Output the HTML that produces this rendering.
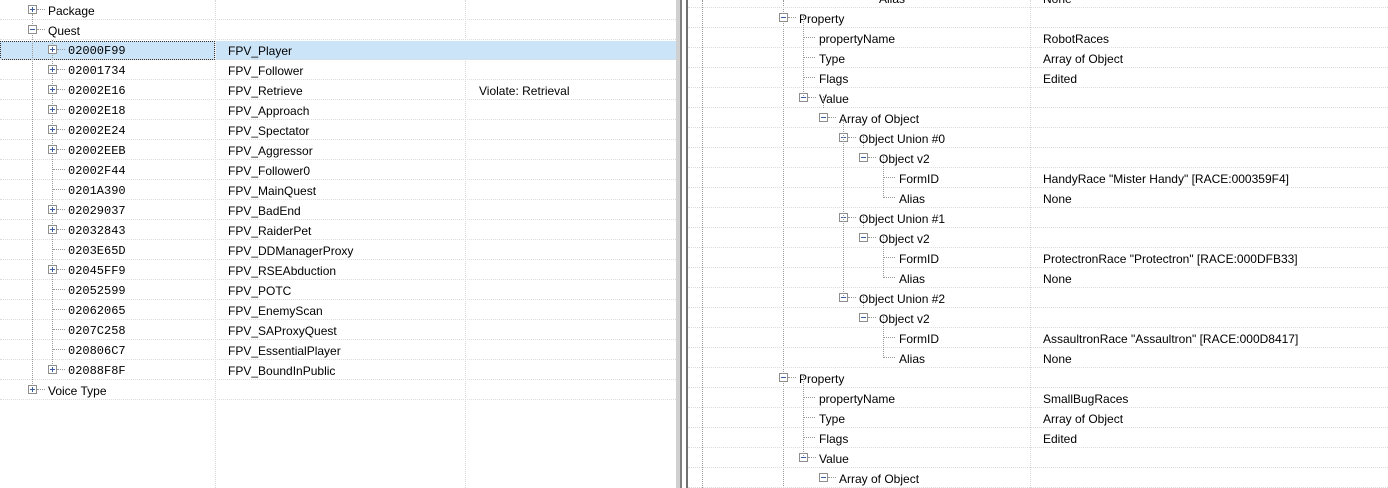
<!DOCTYPE html><html><head><style>
body{margin:0;width:1388px;height:488px;overflow:hidden;background:#fff;font:12px "Liberation Sans",sans-serif;color:#000;position:relative}
.r{position:absolute;height:20px;border-bottom:1px dotted #dcdcdc;box-sizing:border-box}
.t{position:absolute;top:4px;white-space:nowrap}
.m{font-family:"Liberation Mono",monospace;font-size:12px}
.b{position:absolute;top:5px;width:7px;height:7px;border:1px solid #8e8e8e;background:#fff}
.b:before{content:"";position:absolute;left:1px;top:3px;width:5px;height:1px;background:#3a5ea0}
.p:after{content:"";position:absolute;left:3px;top:1px;width:1px;height:5px;background:#3a5ea0}
.h{position:absolute;top:9px;height:0;border-top:1px dotted #999}
.v{position:absolute;width:0;border-left:1px dotted #999}
.cv{position:absolute;width:0;border-left:1px dotted #d8d8d8;top:0;height:488px}
#W{position:absolute;left:0;top:0;width:1388px;height:488px;overflow:hidden}
#RR{position:absolute;left:0;top:-10px;width:1388px;height:500px}
</style></head><body><div id="W">
<div class="cv" style="left:215px"></div><div class="cv" style="left:465px"></div>
<div class="cv" style="left:1030px"></div>
<div style="position:absolute;left:0;top:41px;width:215px;height:19px;background:#cce4f7;border:1px dotted #333;box-sizing:border-box"></div>
<div style="position:absolute;left:216px;top:41px;width:460px;height:19px;background:#cce4f7"></div>
<div class="v" style="left:32px;top:14px;height:378px"></div>
<div class="v" style="left:52px;top:40px;height:332px"></div>
<div class="r" style="top:0;left:0;width:676px"><div class="b p" style="left:28px"></div><div class="h" style="left:37px;width:8px"></div><div class="t" style="left:48px">Package</div></div>
<div class="r" style="top:20px;left:0;width:676px"><div class="b" style="left:28px"></div><div class="h" style="left:37px;width:8px"></div><div class="t" style="left:48px">Quest</div></div>
<div class="r" style="top:40px;left:0;width:676px"><div class="b p" style="left:48px"></div><div class="h" style="left:57px;width:8px"></div><div class="t m" style="left:68px">02000F99</div><div class="t" style="left:228px">FPV_Player</div></div>
<div class="r" style="top:60px;left:0;width:676px"><div class="b p" style="left:48px"></div><div class="h" style="left:57px;width:8px"></div><div class="t m" style="left:68px">02001734</div><div class="t" style="left:228px">FPV_Follower</div></div>
<div class="r" style="top:80px;left:0;width:676px"><div class="b p" style="left:48px"></div><div class="h" style="left:57px;width:8px"></div><div class="t m" style="left:68px">02002E16</div><div class="t" style="left:228px">FPV_Retrieve</div><div class="t" style="left:479px">Violate: Retrieval</div></div>
<div class="r" style="top:100px;left:0;width:676px"><div class="b p" style="left:48px"></div><div class="h" style="left:57px;width:8px"></div><div class="t m" style="left:68px">02002E18</div><div class="t" style="left:228px">FPV_Approach</div></div>
<div class="r" style="top:120px;left:0;width:676px"><div class="b p" style="left:48px"></div><div class="h" style="left:57px;width:8px"></div><div class="t m" style="left:68px">02002E24</div><div class="t" style="left:228px">FPV_Spectator</div></div>
<div class="r" style="top:140px;left:0;width:676px"><div class="b p" style="left:48px"></div><div class="h" style="left:57px;width:8px"></div><div class="t m" style="left:68px">02002EEB</div><div class="t" style="left:228px">FPV_Aggressor</div></div>
<div class="r" style="top:160px;left:0;width:676px"><div class="h" style="left:53px;width:12px"></div><div class="t m" style="left:68px">02002F44</div><div class="t" style="left:228px">FPV_Follower0</div></div>
<div class="r" style="top:180px;left:0;width:676px"><div class="h" style="left:53px;width:12px"></div><div class="t m" style="left:68px">0201A390</div><div class="t" style="left:228px">FPV_MainQuest</div></div>
<div class="r" style="top:200px;left:0;width:676px"><div class="b p" style="left:48px"></div><div class="h" style="left:57px;width:8px"></div><div class="t m" style="left:68px">02029037</div><div class="t" style="left:228px">FPV_BadEnd</div></div>
<div class="r" style="top:220px;left:0;width:676px"><div class="b p" style="left:48px"></div><div class="h" style="left:57px;width:8px"></div><div class="t m" style="left:68px">02032843</div><div class="t" style="left:228px">FPV_RaiderPet</div></div>
<div class="r" style="top:240px;left:0;width:676px"><div class="h" style="left:53px;width:12px"></div><div class="t m" style="left:68px">0203E65D</div><div class="t" style="left:228px">FPV_DDManagerProxy</div></div>
<div class="r" style="top:260px;left:0;width:676px"><div class="b p" style="left:48px"></div><div class="h" style="left:57px;width:8px"></div><div class="t m" style="left:68px">02045FF9</div><div class="t" style="left:228px">FPV_RSEAbduction</div></div>
<div class="r" style="top:280px;left:0;width:676px"><div class="h" style="left:53px;width:12px"></div><div class="t m" style="left:68px">02052599</div><div class="t" style="left:228px">FPV_POTC</div></div>
<div class="r" style="top:300px;left:0;width:676px"><div class="h" style="left:53px;width:12px"></div><div class="t m" style="left:68px">02062065</div><div class="t" style="left:228px">FPV_EnemyScan</div></div>
<div class="r" style="top:320px;left:0;width:676px"><div class="h" style="left:53px;width:12px"></div><div class="t m" style="left:68px">0207C258</div><div class="t" style="left:228px">FPV_SAProxyQuest</div></div>
<div class="r" style="top:340px;left:0;width:676px"><div class="h" style="left:53px;width:12px"></div><div class="t m" style="left:68px">020806C7</div><div class="t" style="left:228px">FPV_EssentialPlayer</div></div>
<div class="r" style="top:360px;left:0;width:676px"><div class="b p" style="left:48px"></div><div class="h" style="left:57px;width:8px"></div><div class="t m" style="left:68px">02088F8F</div><div class="t" style="left:228px">FPV_BoundInPublic</div></div>
<div class="r" style="top:380px;left:0;width:676px"><div class="b p" style="left:28px"></div><div class="h" style="left:37px;width:8px"></div><div class="t" style="left:48px">Voice Type</div></div>
<div style="position:absolute;left:676px;top:0;width:4px;height:488px;background:#d0d0d0"></div>
<div style="position:absolute;left:680px;top:0;width:2px;height:488px;background:#808080"></div>
<div style="position:absolute;left:686px;top:0;width:2px;height:488px;background:#707070"></div>
<div class="v" style="left:702px;top:0;height:488px"></div>
<div class="v" style="left:783px;top:0;height:488px"></div>
<div id="RR">
<div class="r" style="top:-2px;left:688px;width:700px"><div class="t" style="left:191px">Alias</div><div class="t" style="left:355px">None</div></div>
<div class="r" style="top:18px;left:688px;width:700px"><div class="b" style="left:91px"></div><div class="h" style="left:100px;width:8px"></div><div class="t" style="left:111px">Property</div></div>
<div class="r" style="top:38px;left:688px;width:700px"><div class="h" style="left:115px;width:12px"></div><div class="t" style="left:131px">propertyName</div><div class="t" style="left:355px">RobotRaces</div></div>
<div class="r" style="top:58px;left:688px;width:700px"><div class="h" style="left:115px;width:12px"></div><div class="t" style="left:131px">Type</div><div class="t" style="left:355px">Array of Object</div></div>
<div class="r" style="top:78px;left:688px;width:700px"><div class="h" style="left:115px;width:12px"></div><div class="t" style="left:131px">Flags</div><div class="t" style="left:355px">Edited</div></div>
<div class="r" style="top:98px;left:688px;width:700px"><div class="b" style="left:111px"></div><div class="h" style="left:120px;width:8px"></div><div class="t" style="left:131px">Value</div></div>
<div class="r" style="top:118px;left:688px;width:700px"><div class="b" style="left:131px"></div><div class="h" style="left:140px;width:8px"></div><div class="t" style="left:151px">Array of Object</div></div>
<div class="r" style="top:138px;left:688px;width:700px"><div class="b" style="left:151px"></div><div class="h" style="left:160px;width:8px"></div><div class="t" style="left:171px">Object Union #0</div></div>
<div class="r" style="top:158px;left:688px;width:700px"><div class="b" style="left:171px"></div><div class="h" style="left:180px;width:8px"></div><div class="t" style="left:191px">Object v2</div></div>
<div class="r" style="top:178px;left:688px;width:700px"><div class="h" style="left:195px;width:12px"></div><div class="t" style="left:211px">FormID</div><div class="t" style="left:355px">HandyRace "Mister Handy" [RACE:000359F4]</div></div>
<div class="r" style="top:198px;left:688px;width:700px"><div class="h" style="left:195px;width:12px"></div><div class="t" style="left:211px">Alias</div><div class="t" style="left:355px">None</div></div>
<div class="r" style="top:218px;left:688px;width:700px"><div class="b" style="left:151px"></div><div class="h" style="left:160px;width:8px"></div><div class="t" style="left:171px">Object Union #1</div></div>
<div class="r" style="top:238px;left:688px;width:700px"><div class="b" style="left:171px"></div><div class="h" style="left:180px;width:8px"></div><div class="t" style="left:191px">Object v2</div></div>
<div class="r" style="top:258px;left:688px;width:700px"><div class="h" style="left:195px;width:12px"></div><div class="t" style="left:211px">FormID</div><div class="t" style="left:355px">ProtectronRace "Protectron" [RACE:000DFB33]</div></div>
<div class="r" style="top:278px;left:688px;width:700px"><div class="h" style="left:195px;width:12px"></div><div class="t" style="left:211px">Alias</div><div class="t" style="left:355px">None</div></div>
<div class="r" style="top:298px;left:688px;width:700px"><div class="b" style="left:151px"></div><div class="h" style="left:160px;width:8px"></div><div class="t" style="left:171px">Object Union #2</div></div>
<div class="r" style="top:318px;left:688px;width:700px"><div class="b" style="left:171px"></div><div class="h" style="left:180px;width:8px"></div><div class="t" style="left:191px">Object v2</div></div>
<div class="r" style="top:338px;left:688px;width:700px"><div class="h" style="left:195px;width:12px"></div><div class="t" style="left:211px">FormID</div><div class="t" style="left:355px">AssaultronRace "Assaultron" [RACE:000D8417]</div></div>
<div class="r" style="top:358px;left:688px;width:700px"><div class="h" style="left:195px;width:12px"></div><div class="t" style="left:211px">Alias</div><div class="t" style="left:355px">None</div></div>
<div class="r" style="top:378px;left:688px;width:700px"><div class="b" style="left:91px"></div><div class="h" style="left:100px;width:8px"></div><div class="t" style="left:111px">Property</div></div>
<div class="r" style="top:398px;left:688px;width:700px"><div class="h" style="left:115px;width:12px"></div><div class="t" style="left:131px">propertyName</div><div class="t" style="left:355px">SmallBugRaces</div></div>
<div class="r" style="top:418px;left:688px;width:700px"><div class="h" style="left:115px;width:12px"></div><div class="t" style="left:131px">Type</div><div class="t" style="left:355px">Array of Object</div></div>
<div class="r" style="top:438px;left:688px;width:700px"><div class="h" style="left:115px;width:12px"></div><div class="t" style="left:131px">Flags</div><div class="t" style="left:355px">Edited</div></div>
<div class="r" style="top:458px;left:688px;width:700px"><div class="b" style="left:111px"></div><div class="h" style="left:120px;width:8px"></div><div class="t" style="left:131px">Value</div></div>
<div class="r" style="top:478px;left:688px;width:700px"><div class="b" style="left:131px"></div><div class="h" style="left:140px;width:8px"></div><div class="t" style="left:151px">Array of Object</div></div>
<div class="v" style="left:803px;top:26px;height:80px"></div>
<div class="v" style="left:803px;top:386px;height:80px"></div>
<div class="v" style="left:823px;top:106px;height:12px"></div>
<div class="v" style="left:843px;top:126px;height:180px"></div>
<div class="v" style="left:863px;top:146px;height:12px"></div>
<div class="v" style="left:863px;top:226px;height:12px"></div>
<div class="v" style="left:863px;top:306px;height:12px"></div>
<div class="v" style="left:883px;top:166px;height:42px"></div>
<div class="v" style="left:883px;top:246px;height:42px"></div>
<div class="v" style="left:883px;top:326px;height:42px"></div>
</div>
</div></body></html>
